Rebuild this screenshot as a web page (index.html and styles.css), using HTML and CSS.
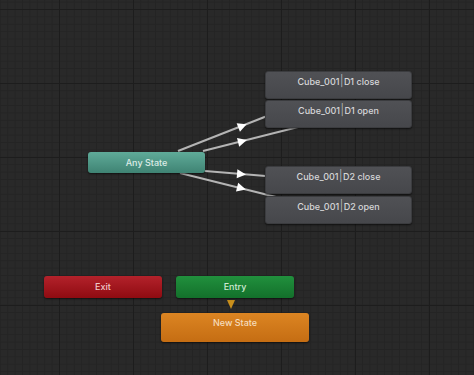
FILE: index.html
```html
<!DOCTYPE html>
<html lang="en">
<head>
  <meta charset="UTF-8" />
  <title>Animator</title>
  <link rel="stylesheet" href="styles.css">
</head>
<body>

  <div class="graph">
    <svg class="links" width="474" height="375" viewBox="0 0 474 375">
      <g class="transition">
        <line x1="178" y1="151" x2="290" y2="107" />
        <polygon points="5,0 -4,-4.5 -4,4.5" transform="translate(242 126) rotate(-21.6)" />
      </g>
      <g class="transition">
        <line x1="203" y1="151" x2="310" y2="124" />
        <polygon points="5,0 -4,-4.5 -4,4.5" transform="translate(242 141.3) rotate(-14)" />
      </g>
      <g class="transition">
        <line x1="205" y1="171" x2="290" y2="178" />
        <polygon points="5,0 -4,-4.5 -4,4.5" transform="translate(241 174) rotate(4.8)" />
      </g>
      <g class="transition">
        <line x1="180" y1="173" x2="300" y2="203" />
        <polygon points="5,0 -4,-4.5 -4,4.5" transform="translate(241 188.2) rotate(14)" />
      </g>
      <polygon class="entry-arrow" points="227,300 235,300 231,309" />
    </svg>

    <div class="node any-state" style="left: 88px; top: 152px;">Any State</div>

    <div class="node state" style="left: 265px; top: 71px;">Cube_001<span class="sep">|</span>D1 close</div>
    <div class="node state" style="left: 265px; top: 100px;">Cube_001<span class="sep">|</span>D1 open</div>
    <div class="node state" style="left: 265px; top: 166px;">Cube_001<span class="sep">|</span>D2 close</div>
    <div class="node state" style="left: 265px; top: 196px;">Cube_001<span class="sep">|</span>D2 open</div>

    <div class="node exit" style="left: 44px; top: 276px;">Exit</div>
    <div class="node entry" style="left: 176px; top: 276px;">Entry</div>
    <div class="node default-state" style="left: 161px; top: 313px;">New State</div>
  </div>

</body>
</html>
```

FILE: styles.css
```css
body {
  margin: 0;
  background-color: #292929;
  font-family: 'Inter', 'Noto Sans', sans-serif;
  overflow: hidden;
}

.graph {
  position: relative;
  width: 474px;
  height: 375px;
  overflow: hidden;
  background-color: #292929;
  background-image:
    linear-gradient(to right, #1d1d1d 1px, transparent 1px),
    linear-gradient(to bottom, #1d1d1d 1px, transparent 1px),
    linear-gradient(to right, #242424 1px, transparent 1px),
    linear-gradient(to bottom, #242424 1px, transparent 1px);
  background-size: 74px 74px, 74px 74px, 7.4px 7.4px, 7.4px 7.4px;
  background-position: 59px 9px, 59px 9px, 59px 9px, 59px 9px;
}

.links {
  position: absolute;
  left: 0;
  top: 0;
}

.transition line {
  stroke: #b4b4b4;
  stroke-width: 2;
}

.transition polygon {
  fill: #ffffff;
}

.entry-arrow {
  fill: #c98f1c;
}

.node {
  position: absolute;
  box-sizing: border-box;
  border-radius: 3px;
  font-size: 9px;
  font-weight: 500;
  text-align: center;
  box-shadow: 0 1px 2px rgba(0, 0, 0, 0.6);
}

.any-state {
  width: 117px;
  height: 21px;
  line-height: 21px;
  color: #dcebe6;
  background: linear-gradient(#5fab99, #3f8373);
}

.state {
  width: 147px;
  height: 28px;
  padding-top: 3px;
  line-height: 13px;
  color: #d6d6d8;
  background: linear-gradient(#505155, #46474b);
  border: 1px solid #3b3c3f;
}

.sep {
  margin: 0 0.5px;
  font-size: 11px;
  font-weight: 300;
  line-height: 10px;
  color: #c8c8ca;
}

.exit {
  width: 118px;
  height: 22px;
  line-height: 22px;
  color: #efc9c9;
  background: linear-gradient(#b3222b, #8f0b11);
}

.entry {
  width: 118px;
  height: 22px;
  line-height: 22px;
  color: #cde9d2;
  background: linear-gradient(#21903d, #13702b);
}

.default-state {
  width: 148px;
  height: 29px;
  padding-top: 3px;
  line-height: 13px;
  color: #f6dcbc;
  background: linear-gradient(#dc8522, #c56d13);
}
```
